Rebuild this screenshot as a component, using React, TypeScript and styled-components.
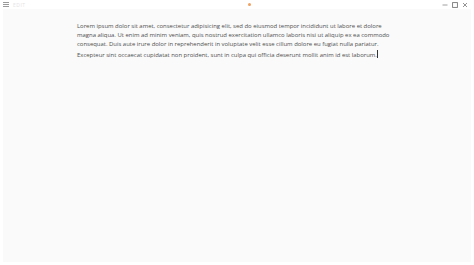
import styled, { createGlobalStyle } from "styled-components";

const GlobalStyle = createGlobalStyle`
  html, body, #root {
    margin: 0;
    padding: 0;
    height: 100%;
  }
  body {
    background: #ffffff;
    font-family: "Open Sans", "Noto Sans", sans-serif;
    overflow: hidden;
  }
`;

const Window = styled.div`
  display: flex;
  flex-direction: column;
  width: 474px;
  height: 265px;
  background: #ffffff;
`;

const TitleBar = styled.div`
  display: grid;
  grid-template-columns: 1fr auto 1fr;
  align-items: center;
  height: 9px;
  padding: 0 3px;
`;

const Left = styled.div`
  display: flex;
  align-items: center;
  gap: 4px;
`;

const Menu = styled.div`
  display: flex;
  flex-direction: column;
  gap: 1px;
  width: 6px;

  span {
    height: 1px;
    background: #9a9a9a;
  }
`;

const Faint = styled.span`
  font-size: 5px;
  color: #e4e4e4;
  letter-spacing: 0.5px;
`;

const Dot = styled.span`
  width: 3px;
  height: 3px;
  margin-left: 24px;
  border-radius: 50%;
  background: #f0a060;
`;

const Controls = styled.div`
  display: flex;
  justify-content: flex-end;
  align-items: center;
  gap: 4px;
  padding-right: 3px;
  color: #777;
`;

const Editor = styled.div`
  flex: 1;
  margin: 0 3px 3px 3px;
  background: #fafafa;
  padding: 12.5px 0 0 74px;
`;

const Text = styled.p`
  margin: 0;
  width: 322px;
  font-size: 5.95px;
  line-height: 9.4px;
  color: #4f4f4f;
`;

const Caret = styled.span`
  display: inline-block;
  width: 0.6px;
  height: 8px;
  background: #333;
  vertical-align: -1.5px;
`;

export default function App() {
  return (
    <>
      <GlobalStyle />
      <Window>
        <TitleBar>
          <Left>
            <Menu>
              <span />
              <span />
              <span />
            </Menu>
            <Faint>EDIT</Faint>
          </Left>
          <Dot />
          <Controls>
            <svg width="6" height="6" viewBox="0 0 6 6">
              <line x1="0.5" y1="3" x2="5.5" y2="3" stroke="#888" strokeWidth="0.8" />
            </svg>
            <svg width="6" height="6" viewBox="0 0 6 6">
              <rect x="0.6" y="0.6" width="4.8" height="4.8" fill="none" stroke="#777" strokeWidth="0.9" />
            </svg>
            <svg width="6" height="6" viewBox="0 0 6 6">
              <path d="M1 1L5 5M5 1L1 5" stroke="#777" strokeWidth="0.8" />
            </svg>
          </Controls>
        </TitleBar>
        <Editor>
          <Text>
            Lorem ipsum dolor sit amet, consectetur adipisicing elit, sed do eiusmod tempor incididunt ut labore et dolore
            magna aliqua. Ut enim ad minim veniam, quis nostrud exercitation ullamco laboris nisi ut aliquip ex ea commodo
            consequat. Duis aute irure dolor in reprehenderit in voluptate velit esse cillum dolore eu fugiat nulla pariatur.
            Excepteur sint occaecat cupidatat non proident, sunt in culpa qui officia deserunt mollit anim id est laborum.
            <Caret />
          </Text>
        </Editor>
      </Window>
    </>
  );
}
